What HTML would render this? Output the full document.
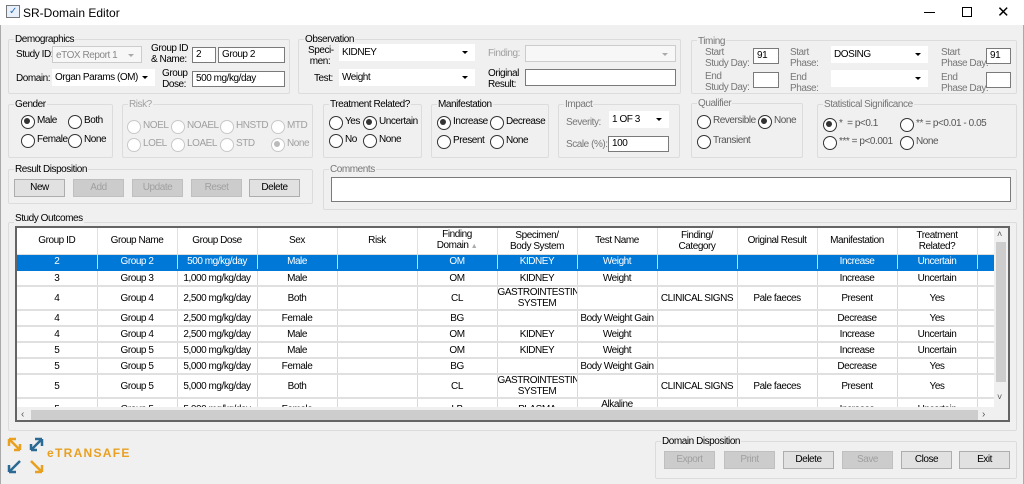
<!DOCTYPE html>
<html><head><meta charset="utf-8"><style>
*{box-sizing:border-box;margin:0;padding:0}
body{width:1024px;height:484px;background:#f0f0f0;font-family:"Liberation Sans",sans-serif;font-size:10px;letter-spacing:-0.45px;color:#000;position:relative;overflow:hidden}
.a{position:absolute}
.tb{left:0;top:0;width:1024px;height:25px;background:#fff}
.g{position:absolute;border:1px solid #dcdcdc;border-radius:2px}
.gl{position:absolute;background:#f0f0f0;padding:0 1px;line-height:11px;white-space:nowrap}
.l{position:absolute;white-space:nowrap;line-height:11px}
.dis{color:#a0a0a0}
.in{position:absolute;background:#fff;border:1px solid #7a7a7a;height:16px;line-height:14px;padding-left:3px;white-space:nowrap}
.cb{position:absolute;background:#fff;height:17px;line-height:17px;padding-left:3px;white-space:nowrap}
.cb:after{content:"";position:absolute;right:7px;top:7px;border:3px solid transparent;border-top:3px solid #000;border-bottom:0}
.cbd{background:#f7f7f7;border:1px solid #ccc;color:#888}
.cbd:after{border-top-color:#aaa}
.r{position:absolute;white-space:nowrap;line-height:12px;padding-left:16px}
.r:before{content:"";position:absolute;left:0;top:0;width:12px;height:12px;border:1px solid #333;border-radius:50%;background:#fff}
.r.on:after{content:"";position:absolute;left:3px;top:3px;width:6px;height:6px;border-radius:50%;background:#333}
.r.dis:before{border-color:#c8c8c8}
.r.dis.on:after{background:#bbb}
.bt{position:absolute;height:18px;width:51px;border:1px solid #adadad;background:#e1e1e1;text-align:center;line-height:16px}
.bt.dis{background:#ccc;border-color:#bfbfbf;color:#a0a0a0}
table{border-collapse:collapse;table-layout:fixed}
td{border-right:1px solid #d8d8d8;border-bottom:2px solid #e0e0e0;text-align:center;overflow:hidden;white-space:nowrap;line-height:11px}
tr.sel td{background:#0078d7;color:#fff;border-bottom-color:#0078d7}
th{font-weight:normal;border-right:1px solid #e0e0e0;line-height:11px;height:26px;background:#fff;border-bottom:1px solid #ddd}
</style></head><body>
<div class="a tb"></div>
<div class="a" style="left:6px;top:5px;width:14px;height:13px;border:1px solid #777;background:#e8f0fb"></div>
<div class="a" style="left:9px;top:8px;color:#2a6ebb;font-size:10px;line-height:8px">✓</div>
<div class="l" style="left:23px;top:7px;font-size:12px;line-height:12px;letter-spacing:0">SR-Domain Editor</div>
<div class="a" style="left:924px;top:12px;width:11px;height:1px;background:#000"></div>
<div class="a" style="left:962px;top:7px;width:10px;height:10px;border:1px solid #000"></div>
<div class="l" style="left:997px;top:5px;font-size:15px;line-height:15px">✕</div>
<div class="a" style="left:0;top:25px;width:1px;height:459px;background:#aaa"></div>
<div class="a" style="right:0;top:25px;width:1px;height:459px;background:#aaa"></div>

<div class="g" style="left:8px;top:39px;width:282px;height:55px"></div>
<div class="gl" style="left:14px;top:34px">Demographics</div>
<div class="l" style="left:16px;top:49px">Study ID:</div>
<div class="cb cbd" style="left:52px;top:46px;width:90px">eTOX Report 1</div>
<div class="l" style="left:151px;top:43px;line-height:11px">Group ID<br>&amp; Name:</div>
<div class="in" style="left:192px;top:47px;width:24px">2</div>
<div class="in" style="left:218px;top:47px;width:67px">Group 2</div>
<div class="l" style="left:16px;top:73px">Domain:</div>
<div class="cb" style="left:52px;top:69px;width:103px">Organ Params (OM)</div>
<div class="l" style="left:162px;top:68px;text-align:right;width:24px;line-height:11px">Group<br>Dose:</div>
<div class="in" style="left:192px;top:71px;width:93px">500 mg/kg/day</div>

<div class="g" style="left:298px;top:39px;width:383px;height:55px"></div>
<div class="gl" style="left:304px;top:34px">Observation</div>
<div class="l" style="left:308px;top:45px;text-align:center;width:24px">Speci-<br>men:</div>
<div class="cb" style="left:339px;top:44px;width:136px">KIDNEY</div>
<div class="l dis" style="left:488px;top:48px">Finding:</div>
<div class="cb cbd" style="left:525px;top:45px;width:151px"></div>
<div class="l" style="left:314px;top:73px">Test:</div>
<div class="cb" style="left:339px;top:69px;width:136px">Weight</div>
<div class="l" style="left:488px;top:68px">Original<br>Result:</div>
<div class="in" style="left:525px;top:69px;width:151px;height:17px"></div>

<div class="g" style="left:691px;top:40px;width:326px;height:54px"></div>
<div class="gl" style="left:697px;top:36px;color:#777">Timing</div>
<div class="l" style="left:705px;top:47px;color:#777">Start<br>Study Day:</div>
<div class="in" style="left:753px;top:48px;width:26px">91</div>
<div class="l" style="left:790px;top:47px;color:#777">Start<br>Phase:</div>
<div class="cb" style="left:831px;top:46px;width:97px">DOSING</div>
<div class="l" style="left:941px;top:47px;color:#777">Start<br>Phase Day:</div>
<div class="in" style="left:986px;top:48px;width:25px">91</div>
<div class="l" style="left:705px;top:71px;color:#777">End<br>Study Day:</div>
<div class="in" style="left:753px;top:72px;width:26px"></div>
<div class="l" style="left:790px;top:72px;color:#777">End<br>Phase:</div>
<div class="cb" style="left:831px;top:70px;width:97px"></div>
<div class="l" style="left:941px;top:72px;color:#777">End<br>Phase Day:</div>
<div class="in" style="left:986px;top:72px;width:25px"></div>

<div class="g" style="left:8px;top:104px;width:105px;height:54px"></div>
<div class="gl" style="left:14px;top:99px">Gender</div>
<div class="r on" style="left:21px;top:115px">Male</div>
<div class="r" style="left:68px;top:115px">Both</div>
<div class="r" style="left:21px;top:134px">Female</div>
<div class="r" style="left:68px;top:134px">None</div>

<div class="g" style="left:122px;top:104px;width:191px;height:54px"></div>
<div class="gl dis" style="left:128px;top:99px">Risk?</div>
<div class="r dis" style="left:127px;top:120px">NOEL</div>
<div class="r dis" style="left:171px;top:120px">NOAEL</div>
<div class="r dis" style="left:220px;top:120px">HNSTD</div>
<div class="r dis" style="left:271px;top:120px">MTD</div>
<div class="r dis" style="left:127px;top:138px">LOEL</div>
<div class="r dis" style="left:171px;top:138px">LOAEL</div>
<div class="r dis" style="left:220px;top:138px">STD</div>
<div class="r dis on" style="left:271px;top:138px">None</div>

<div class="g" style="left:323px;top:104px;width:99px;height:54px"></div>
<div class="gl" style="left:329px;top:99px">Treatment Related?</div>
<div class="r" style="left:329px;top:116px">Yes</div>
<div class="r on" style="left:363px;top:116px">Uncertain</div>
<div class="r" style="left:329px;top:134px">No</div>
<div class="r" style="left:363px;top:134px">None</div>

<div class="g" style="left:431px;top:104px;width:118px;height:54px"></div>
<div class="gl" style="left:437px;top:99px">Manifestation</div>
<div class="r on" style="left:437px;top:116px">Increase</div>
<div class="r" style="left:490px;top:116px">Decrease</div>
<div class="r" style="left:437px;top:135px">Present</div>
<div class="r" style="left:490px;top:135px">None</div>

<div class="g" style="left:558px;top:104px;width:122px;height:54px"></div>
<div class="gl" style="left:564px;top:99px;color:#777">Impact</div>
<div class="l" style="left:566px;top:117px;color:#777">Severity:</div>
<div class="cb" style="left:609px;top:111px;width:60px">1 OF 3</div>
<div class="l" style="left:566px;top:139px;color:#777">Scale (%):</div>
<div class="in" style="left:608px;top:136px;width:61px">100</div>

<div class="g" style="left:691px;top:103px;width:112px;height:55px"></div>
<div class="gl" style="left:697px;top:98px;color:#777">Qualifier</div>
<div class="r" style="left:697px;top:115px;color:#555">Reversible</div>
<div class="r on" style="left:758px;top:115px;color:#555">None</div>
<div class="r" style="left:697px;top:135px;color:#555">Transient</div>

<div class="g" style="left:817px;top:104px;width:200px;height:54px"></div>
<div class="gl" style="left:823px;top:99px;color:#777">Statistical Significance</div>
<div class="r on" style="left:823px;top:118px;color:#555">* &nbsp;= p&lt;0.1</div>
<div class="r" style="left:900px;top:118px;color:#555">** = p&lt;0.01 - 0.05</div>
<div class="r" style="left:823px;top:136px;color:#555">*** = p&lt;0.001</div>
<div class="r" style="left:900px;top:136px;color:#555">None</div>

<div class="g" style="left:8px;top:169px;width:305px;height:35px"></div>
<div class="gl" style="left:14px;top:164px">Result Disposition</div>
<div class="bt" style="left:14px;top:179px">New</div>
<div class="bt dis" style="left:73px;top:179px">Add</div>
<div class="bt dis" style="left:132px;top:179px">Update</div>
<div class="bt dis" style="left:191px;top:179px">Reset</div>
<div class="bt" style="left:249px;top:179px">Delete</div>

<div class="g" style="left:323px;top:169px;width:694px;height:41px"></div>
<div class="gl" style="left:329px;top:164px;color:#777">Comments</div>
<div class="in" style="left:331px;top:177px;width:680px;height:25px"></div>

<div class="g" style="left:8px;top:222px;width:1009px;height:209px"></div>
<div class="gl" style="left:14px;top:213px">Study Outcomes</div>
<div class="a" style="left:15px;top:226px;width:995px;height:196px;border:2px solid #646464;background:#fff;overflow:hidden">
<table style="width:1040px">
<colgroup><col style="width:80px"><col style="width:80px"><col style="width:80px"><col style="width:80px"><col style="width:80px"><col style="width:80px"><col style="width:80px"><col style="width:80px"><col style="width:80px"><col style="width:80px"><col style="width:80px"><col style="width:80px"><col style="width:80px"></colgroup>
<tr><th>Group ID</th><th>Group Name</th><th>Group Dose</th><th>Sex</th><th>Risk</th><th>Finding<br>Domain <span style="color:#aaa;font-size:7px">▲</span></th><th>Specimen/<br>Body System</th><th>Test Name</th><th>Finding/<br>Category</th><th>Original Result</th><th>Manifestation</th><th>Treatment<br>Related?</th><th>S</th></tr>
<tr class="sel" style="height:16px"><td>2</td><td>Group 2</td><td>500 mg/kg/day</td><td>Male</td><td></td><td>OM</td><td>KIDNEY</td><td>Weight</td><td></td><td></td><td>Increase</td><td>Uncertain</td><td></td></tr>
<tr style="height:16px"><td>3</td><td>Group 3</td><td>1,000 mg/kg/day</td><td>Male</td><td></td><td>OM</td><td>KIDNEY</td><td>Weight</td><td></td><td></td><td>Increase</td><td>Uncertain</td><td></td></tr>
<tr style="height:23px"><td>4</td><td>Group 4</td><td>2,500 mg/kg/day</td><td>Both</td><td></td><td>CL</td><td style="vertical-align:top">GASTROINTESTINAL<br>SYSTEM</td><td></td><td>CLINICAL SIGNS</td><td>Pale faeces</td><td>Present</td><td>Yes</td><td></td></tr>
<tr style="height:16px"><td>4</td><td>Group 4</td><td>2,500 mg/kg/day</td><td>Female</td><td></td><td>BG</td><td></td><td>Body Weight Gain</td><td></td><td></td><td>Decrease</td><td>Yes</td><td></td></tr>
<tr style="height:16px"><td>4</td><td>Group 4</td><td>2,500 mg/kg/day</td><td>Male</td><td></td><td>OM</td><td>KIDNEY</td><td>Weight</td><td></td><td></td><td>Increase</td><td>Uncertain</td><td></td></tr>
<tr style="height:16px"><td>5</td><td>Group 5</td><td>5,000 mg/kg/day</td><td>Male</td><td></td><td>OM</td><td>KIDNEY</td><td>Weight</td><td></td><td></td><td>Increase</td><td>Uncertain</td><td></td></tr>
<tr style="height:16px"><td>5</td><td>Group 5</td><td>5,000 mg/kg/day</td><td>Female</td><td></td><td>BG</td><td></td><td>Body Weight Gain</td><td></td><td></td><td>Decrease</td><td>Yes</td><td></td></tr>
<tr style="height:23px"><td>5</td><td>Group 5</td><td>5,000 mg/kg/day</td><td>Both</td><td></td><td>CL</td><td style="vertical-align:top">GASTROINTESTINAL<br>SYSTEM</td><td></td><td>CLINICAL SIGNS</td><td>Pale faeces</td><td>Present</td><td>Yes</td><td></td></tr>
<tr style="height:23px"><td>5</td><td>Group 5</td><td>5,000 mg/kg/day</td><td>Female</td><td></td><td>LB</td><td>PLASMA</td><td style="vertical-align:top">Alkaline</td><td></td><td></td><td>Increase</td><td>Uncertain</td><td></td></tr>
</table>
<div class="a" style="left:0;top:179px;width:977px;height:15px;background:#f0f0f0"></div>
<div class="a" style="left:14px;top:182px;width:947px;height:10px;background:#cdcdcd"></div>
<div class="l" style="left:4px;top:181px;color:#555">‹</div>
<div class="l" style="left:965px;top:181px;color:#555">›</div>
<div class="a" style="left:977px;top:0;width:14px;height:179px;background:#f0f0f0"></div>
<div class="a" style="left:979px;top:14px;width:10px;height:140px;background:#cdcdcd"></div>
<div class="l" style="left:980px;top:1px;color:#555;font-size:9px">˄</div>
<div class="l" style="left:980px;top:164px;color:#555;font-size:9px">˅</div>
<div class="a" style="left:977px;top:179px;width:14px;height:15px;background:#f0f0f0"></div>
</div>

<svg class="a" style="left:7px;top:437px" width="40" height="40" viewBox="0 0 40 40" fill="none" stroke-width="2.5">
<g stroke="#e8a020"><path d="M2 2 L13 13 M2 2 V9 M2 2 H9 M13 13 V7 M13 13 H7"/><path d="M24 24 L35 35 M35 35 V28 M35 35 H28"/></g>
<g stroke="#2b6a94"><path d="M35 2 L24 13 M35 2 V9 M35 2 H28 M24 13 V7 M24 13 H30"/><path d="M2 35 L13 24 M2 35 V28 M2 35 H9"/></g>
</svg>
<div class="l" style="left:47px;top:447px;font-size:12px;letter-spacing:1.3px;color:#e8a020;font-weight:bold;line-height:12px">eTRANSAFE</div>

<div class="g" style="left:655px;top:441px;width:362px;height:38px"></div>
<div class="gl" style="left:661px;top:436px">Domain Disposition</div>
<div class="bt dis" style="left:664px;top:451px">Export</div>
<div class="bt dis" style="left:724px;top:451px">Print</div>
<div class="bt" style="left:783px;top:451px">Delete</div>
<div class="bt dis" style="left:842px;top:451px">Save</div>
<div class="bt" style="left:901px;top:451px">Close</div>
<div class="bt" style="left:959px;top:451px">Exit</div>
</body></html>
